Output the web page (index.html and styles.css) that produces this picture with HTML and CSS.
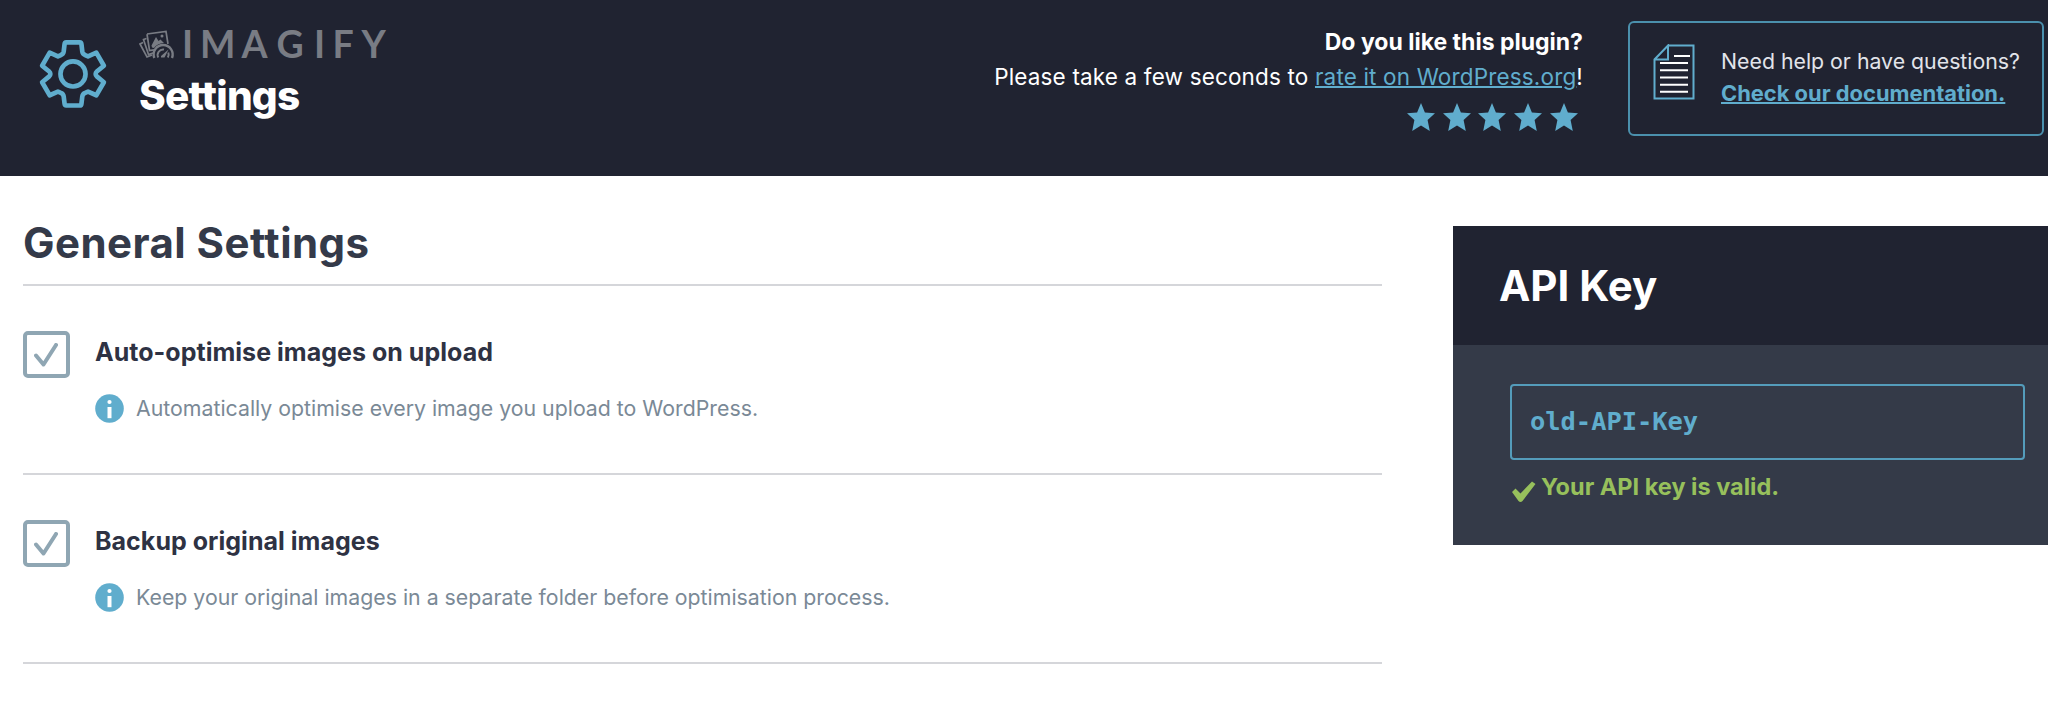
FILE: index.html
```html
<!DOCTYPE html>
<html lang="en">
<head>
    <meta charset="UTF-8">
    <meta name="viewport" content="width=device-width, initial-scale=1.0">
    <title>Imagify Settings</title>
    <link rel="stylesheet" href="styles.css">
</head>
<body>
    <div class="header">
        <svg class="gear" viewBox="-1 -1.500 70 72" fill="none">
            <path d="M27 3H41Q42.500 3 42.700 5L43.600 12.500Q44 15 46.500 16L49.500 17.300L58 13.600L65.800 27L58.500 33Q57.300 34 57.300 35.500T58.500 38L65.800 44L58 57.400L49.500 53.700L46.500 55Q44 56 43.600 58.500L42.700 66Q42.500 68 41 68H27Q25.500 68 25.300 66L24.400 58.500Q24 56 21.500 55L18.500 53.700L10 57.400L2.200 44L9.500 38Q10.700 37 10.700 35.500T9.500 33L2.200 27L10 13.600L18.500 17.300L21.500 16Q24 15 24.400 12.500L25.300 5Q25.500 3 27 3Z" stroke-width="4.800" stroke-linejoin="round"/>
            <circle cx="34" cy="35.500" r="12.900" stroke-width="4.800"/>
        </svg>
        <div class="brand">
            <svg class="logo" viewBox="0 0 254 48">
                <g fill="none" stroke-width="1.700">
                    <path d="M8 14L27 11.500L29 24M8 14L10.500 30.500L15 29.800"/>
                    <path d="M7.500 18.500L4.500 19.500L9.500 34.500L14 33M4 22.500L1 24L8 37L13 35"/>
                    <path d="M15.300 38A9.500 9.500 0 1 1 33 38" stroke-width="2.400"/>
                    <path d="M19.300 37.500A5.500 5.500 0 0 1 25 29.500M29.300 32.500A5.500 5.500 0 0 1 28.800 37.500" stroke-width="2"/>
                </g>
                <path class="fill" d="M12.500 25.500L17 17L19.500 21L21.500 19.500L25 23Q18 23.500 15 28L13 27.500ZM22 36L29.500 29.500L25.500 37.500H22Z"/>
                <circle class="fill" cx="23" cy="16" r="1.500"/>
                <text x="43 61 102.500 137.500 175 193.500 222.500" y="38">IMAGIFY</text>
            </svg>
            <h1>Settings</h1>
        </div>
        <div class="rate">
            <p class="ask">Do you like this plugin?</p>
            <p class="please">Please take a few seconds to <a href="#">rate it on WordPress.org</a>!</p>
            <div class="stars">
                <svg viewBox="0 0 28 28"><path d="M14 0L17.900 9.500L28 10.300L20.600 17L22.800 28L14 22.500L5.200 28L7.400 17L0 10.300L10.100 9.500Z"/></svg>
                <svg viewBox="0 0 28 28"><path d="M14 0L17.900 9.500L28 10.300L20.600 17L22.800 28L14 22.500L5.200 28L7.400 17L0 10.300L10.100 9.500Z"/></svg>
                <svg viewBox="0 0 28 28"><path d="M14 0L17.900 9.500L28 10.300L20.600 17L22.800 28L14 22.500L5.200 28L7.400 17L0 10.300L10.100 9.500Z"/></svg>
                <svg viewBox="0 0 28 28"><path d="M14 0L17.900 9.500L28 10.300L20.600 17L22.800 28L14 22.500L5.200 28L7.400 17L0 10.300L10.100 9.500Z"/></svg>
                <svg viewBox="0 0 28 28"><path d="M14 0L17.900 9.500L28 10.300L20.600 17L22.800 28L14 22.500L5.200 28L7.400 17L0 10.300L10.100 9.500Z"/></svg>
            </div>
        </div>
        <div class="help">
            <svg class="doc" viewBox="0 0 42 56" fill="none" stroke-width="2">
                <path d="M15 1.500H40.500V54.500H1.500V15.500L15 1.500V15.500H1.500"/>
                <path class="lines" d="M21 12H37M7 19H35M7 26.300H35M7 33.500H35M7 40.700H35M7 47.800H35"/>
            </svg>
            <div class="help-text">
                <p>Need help or have questions?</p>
                <a href="#">Check our documentation.</a>
            </div>
        </div>
    </div>

    <div class="content">
        <div class="main">
            <h2>General Settings</h2>
            <div class="option">
                <div class="box"><svg viewBox="0 0 24 24"><path d="M2 12.500L9.500 21.500L22 2"/></svg></div>
                <div class="option-text">
                    <h3>Auto-optimise images on upload</h3>
                    <p>
                        <svg class="info" viewBox="0 0 29 29"><circle cx="14.500" cy="14.500" r="14.300"/><path d="M12.500 13H16.500V24.200H12.500Z"/><circle class="dot" cx="14.500" cy="8" r="2.100"/></svg>
                        Automatically optimise every image you upload to WordPress.
                    </p>
                </div>
            </div>
            <div class="option">
                <div class="box"><svg viewBox="0 0 24 24"><path d="M2 12.500L9.500 21.500L22 2"/></svg></div>
                <div class="option-text">
                    <h3>Backup original images</h3>
                    <p>
                        <svg class="info" viewBox="0 0 29 29"><circle cx="14.500" cy="14.500" r="14.300"/><path d="M12.500 13H16.500V24.200H12.500Z"/><circle class="dot" cx="14.500" cy="8" r="2.100"/></svg>
                        Keep your original images in a separate folder before optimisation process.
                    </p>
                </div>
            </div>
        </div>

        <div class="sidebar">
            <h2>API Key</h2>
            <div class="sidebar-body">
                <div class="key">old-API-Key</div>
                <p class="valid">
                    <svg viewBox="0 0 24 22"><path d="M0 11L3.500 7.500L8.500 12.500L20 0.500L23.500 3L10.500 20Q8.500 22 6.500 20Z"/></svg>
                    Your API key is valid.
                </p>
            </div>
        </div>
    </div>
</body>
</html>
```
FILE: styles.css
```css
*{
    box-sizing: border-box;
    padding: 0;
    margin: 0;
}
body{
    height: 703px;
    overflow: hidden;
    background-color: #fff;
    font-family: Inter, "Liberation Sans", sans-serif;
}
a{
    color: #60adcd;
    text-decoration: underline;
    text-decoration-thickness: 2px;
}

/* header */
.header{
    display: flex;
    align-items: flex-start;
    height: 176px;
    padding-left: 39px;
    color: #fff;
    background-color: #202331;
}
.gear{
    width: 68px;
    height: 70px;
    margin-top: 38px;
    stroke: #60adcd;
}
.brand{
    margin: 20px 0 0 32px;
}
.logo{
    display: block;
    width: 254px;
    height: 48px;
    stroke: #797c84;
}
.logo text,
.logo .fill{
    fill: #797c84;
    stroke: none;
}
.logo text{
    font: 700 37.500px Lato, sans-serif;
}
.brand h1{
    margin-top: 4px;
    font-size: 40.500px;
    font-weight: 800;
    line-height: 48px;
    letter-spacing: -0.800px;
}
.rate{
    margin: 25px 45px 0 auto;
    text-align: right;
}
.ask{
    font-size: 23px;
    font-weight: 700;
    line-height: 35px;
}
.please{
    font-size: 22.500px;
    line-height: 33px;
    letter-spacing: 0.160px;
}
.stars{
    display: flex;
    justify-content: flex-end;
    gap: 7.800px;
    margin: 10px 5px 0 0;
}
.stars svg{
    width: 28px;
    height: 28px;
    fill: #60adcd;
}
.help{
    display: flex;
    width: 416px;
    height: 115px;
    margin: 21px 4px 0 0;
    padding: 21px 0 0 23px;
    border: 2px solid #4b90ad;
    border-radius: 6px;
}
.doc{
    width: 42px;
    height: 56px;
    stroke: #60adcd;
}
.doc .lines{
    stroke: #fff;
}
.help-text{
    margin: 1px 0 0 26px;
    font-size: 21.300px;
    line-height: 32px;
    color: #e2e4ea;
}
.help-text a{
    font-size: 21.900px;
    font-weight: 700;
}

/* content */
.content{
    display: flex;
    padding-left: 23px;
}
.main{
    width: 1359px;
}
.main h2{
    height: 110px;
    padding-top: 42px;
    border-bottom: 2px solid #d5d6da;
    font-size: 42px;
    line-height: 50px;
    letter-spacing: 0.450px;
    color: #343a49;
}
.option{
    display: flex;
    height: 189px;
    padding-top: 45px;
    border-bottom: 2px solid #d5d6da;
}
.box{
    width: 47px;
    height: 47px;
    padding: 8px 7px;
    border: 4px solid #8fa6b3;
    border-radius: 5px;
}
.box svg{
    display: block;
    width: 24px;
    height: 24px;
    fill: none;
    stroke: #8fa6b3;
    stroke-width: 4;
    stroke-linecap: round;
    stroke-linejoin: round;
}
.option-text{
    margin-left: 25px;
}
.option-text h3{
    margin-top: 6px;
    font-size: 25px;
    line-height: 30px;
    letter-spacing: 0.030px;
    color: #2e3243;
}
.option-text p{
    display: flex;
    margin-top: 27px;
    font-size: 21.300px;
    line-height: 28px;
    color: #7a8996;
}
.info{
    width: 29px;
    height: 29px;
    margin-right: 12px;
    fill: #60adcd;
}
.info path,
.info .dot{
    fill: #fff;
}

/* api key */
.sidebar{
    flex: 1;
    margin: 50px 0 0 71px;
    color: #fff;
}
.sidebar h2{
    height: 119px;
    padding: 35px 0 0 46px;
    font-size: 42px;
    line-height: 50px;
    background-color: #202331;
}
.sidebar-body{
    height: 200px;
    padding: 39px 23px 0 57px;
    background-color: #343a48;
}
.key{
    height: 76px;
    padding-left: 18px;
    border: 2px solid #549cbb;
    border-radius: 4px;
    font: 700 25.400px/71px "DejaVu Sans Mono", monospace;
    color: #60adcd;
}
.valid{
    display: flex;
    margin-top: 12px;
    font-size: 23.500px;
    font-weight: 700;
    line-height: 29px;
    color: #97c05c;
}
.valid svg{
    width: 24px;
    height: 22px;
    margin: 9px 5px 0 2px;
    fill: #97c05c;
}
```
